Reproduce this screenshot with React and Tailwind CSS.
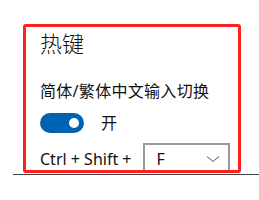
export default function App() {
  return (
    <div className="w-[259px] h-[200px] bg-white overflow-hidden font-['Noto_Sans','Noto_Sans_CJK_SC',sans-serif] text-[#111]">
      <div className="pt-[24px] pl-[23px]">
        <div className="w-[218px] h-[149px] border-[3px] border-[#ff1f1f] rounded-[3px] overflow-hidden">
          <div className="pl-[14px] pt-[2px]">
            <h1 className="text-[22px] leading-[28px] font-light">热键</h1>
            <p className="mt-[24px] text-[16px] leading-[20px] tracking-[0.3px]">简体/繁体中文输入切换</p>
            <div className="mt-[12px] flex items-center">
              <div className="w-[44px] h-[20px] rounded-full bg-[#0063b1] flex items-center justify-end pr-[5px]">
                <div className="w-[10px] h-[10px] rounded-full bg-white" />
              </div>
              <span className="ml-[17px] text-[16px] leading-[20px]">开</span>
            </div>
            <div className="mt-[10px] flex items-center">
              <span className="text-[16px] leading-[20px]">Ctrl + Shift +</span>
              <div className="ml-[11px] w-[87px] h-[32px] border-2 border-[#9a9a9a] flex items-center justify-between pl-[12px] pr-[8px]">
                <span className="text-[16px] leading-[20px]">F</span>
                <svg width="14" height="8" viewBox="0 0 14 8" fill="none">
                  <path d="M1 1.5L7 6.5L13 1.5" stroke="#555" strokeWidth="1" />
                </svg>
              </div>
            </div>
          </div>
        </div>
      </div>
      <div className="ml-[13px] mt-[1px] h-px bg-[#444]" />
    </div>
  );
}
